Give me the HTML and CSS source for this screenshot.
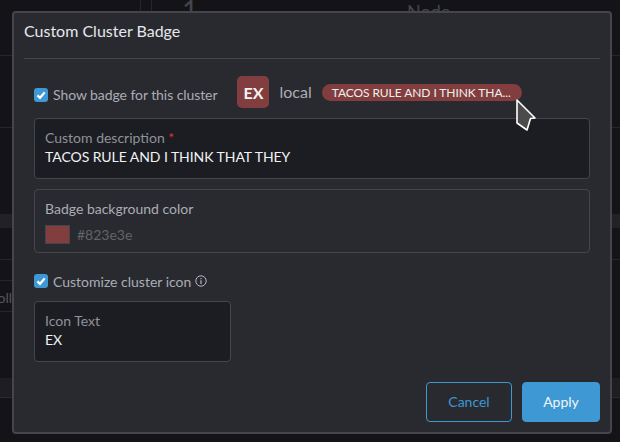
FILE: index.html
```html
<!DOCTYPE html>
<html lang="en">
<head>
    <meta charset="UTF-8" />
    <meta name="viewport" content="width=device-width, initial-scale=1" />
    <title>Custom Cluster Badge</title>
    <link rel="stylesheet" href="styles.css">
</head>
<body>
    <!-- dimmed page behind the dialog -->
    <div class="backdrop">
        <div class="bg-row bg-head">
            <span class="bg-count">1</span>
            <span class="bg-title">Node</span>
        </div>
        <div class="bg-row bg-r2"></div>
        <div class="bg-row bg-r3"></div>
        <div class="bg-row bg-band"></div>
        <div class="bg-row bg-r4"></div>
        <div class="bg-row bg-short bg-r5"></div>
        <div class="bg-row bg-short bg-r6"><span class="bg-word">Coll</span></div>
        <div class="bg-gap"></div>
        <div class="bg-row bg-band bg-band-low"></div>
    </div>

    <div class="modal">
        <h2 class="modal-title">Custom Cluster Badge</h2>
        <div class="modal-body">
            <div class="badge-row">
                <label class="check-label check-label-first">
                    <span class="check">
                        <svg viewBox="0 0 14 14" width="14" height="14"><path d="M3.4 7.4 L6 9.8 L10.7 4.4" fill="none" stroke="#fff" stroke-width="2.2"/></svg>
                    </span>
                    Show badge for this cluster
                </label>
                <span class="cluster-icon">EX</span>
                <span class="cluster-name">local</span>
                <span class="pill">TACOS RULE AND I THINK THA...</span>
            </div>

            <div class="field">
                <div class="field-label">Custom description <span class="required">*</span></div>
                <div class="field-value">TACOS RULE AND I THINK THAT THEY</div>
            </div>

            <div class="field field-color">
                <div class="field-label field-label-light">Badge background color</div>
                <div class="color-line">
                    <span class="swatch"></span>
                    <span class="color-code">#823e3e</span>
                </div>
            </div>

            <label class="check-label check-label-second">
                <span class="check">
                    <svg viewBox="0 0 14 14" width="14" height="14"><path d="M3.4 7.4 L6 9.8 L10.7 4.4" fill="none" stroke="#fff" stroke-width="2.2"/></svg>
                </span>
                <span class="check-text">Customize cluster icon</span>
                <svg class="info" viewBox="0 0 12 12" width="12" height="12"><circle cx="6" cy="6" r="5.2" fill="none" stroke="#b4b8bf" stroke-width="1"/><path d="M6 5.2 V9 M6 3 V4.2" stroke="#b4b8bf" stroke-width="1.2"/></svg>
            </label>

            <div class="field field-icon">
                <div class="field-label">Icon Text</div>
                <div class="field-value">EX</div>
            </div>
        </div>
        <div class="modal-actions">
            <button class="btn btn-cancel">Cancel</button>
            <button class="btn btn-apply">Apply</button>
        </div>
    </div>

    <svg class="cursor" viewBox="0 0 22 36" width="22" height="36">
        <path d="M2 2 L20 20 L15.5 20.5 L12 32 L2 25 Z" fill="#4b4b4b" stroke="#fff" stroke-width="1.6" stroke-linejoin="round"/>
    </svg>
</body>
</html>
```
FILE: styles.css
```css
html, body {
    margin: 0;
    height: 100%;
    overflow: hidden;
}
body {
    font-family: 'Lato', 'Liberation Sans', sans-serif;
    background: #141418;
    color: #b6bac1;
    font-size: 14px;
}
.backdrop {
    height: 442px;
    overflow: hidden;
}
.bg-row {
    box-sizing: border-box;
    border-bottom: 1px solid #26262b;
}
.bg-head {
    height: 56px;
    position: relative;
    background: linear-gradient(90deg, transparent 140px, #26262b 140px, #26262b 141px, transparent 141px, transparent 151px, #26262b 151px, #26262b 152px, transparent 152px);
}
.bg-count {
    position: absolute;
    left: 182px;
    top: -7px;
    font-size: 28px;
    color: #45454b;
}
.bg-title {
    position: absolute;
    left: 407px;
    top: 0;
    font-size: 18px;
    color: #45454b;
}
.bg-r2 {
    height: 72px;
}
.bg-r3 {
    height: 86px;
    border-bottom: none;
}
.bg-band {
    height: 14px;
    background: #212126;
    border-bottom: none;
}
.bg-r4 {
    height: 32px;
}
.bg-short {
    width: 12px;
    overflow: hidden;
}
.bg-r5 {
    height: 21px;
}
.bg-r6 {
    height: 31px;
    position: relative;
    white-space: nowrap;
}
.bg-word {
    position: absolute;
    right: 0;
    top: 8px;
    font-size: 14px;
    color: #56565c;
}
.bg-gap {
    height: 66px;
}
.bg-band-low {
    height: 20px;
    background: #1d1d22;
    border-bottom: 1px solid #2a2a2f;
}

.modal {
    position: absolute;
    left: 12px;
    top: 11px;
    width: 600px;
    height: 423px;
    box-sizing: border-box;
    background: #292a2f;
    border: 2px solid #45464b;
    border-radius: 4px;
    padding: 0 10px;
}
.modal-title {
    margin: 0;
    height: 46px;
    box-sizing: border-box;
    padding-top: 8px;
    border-bottom: 1px solid #45464b;
    font-size: 16px;
    line-height: 20px;
    font-weight: 400;
    color: #e6e8eb;
}
.modal-body {
    padding: 17px 10px 0;
}
.badge-row {
    display: flex;
    align-items: center;
    height: 32px;
    margin-bottom: 10px;
}
.check-label {
    display: flex;
    align-items: center;
    font-size: 14px;
    line-height: 18px;
    color: #a9adb5;
}
.check-label-first {
    margin-top: 6px;
    letter-spacing: -0.07px;
}
.check {
    width: 14px;
    height: 14px;
    border-radius: 3px;
    background: #3d98d3;
    margin-right: 5px;
    display: block;
}
.check svg {
    display: block;
}
.cluster-icon {
    margin-left: 20px;
    width: 32px;
    height: 32px;
    border-radius: 5px;
    background: #823e3e;
    color: #f4f4f4;
    font-weight: 700;
    font-size: 16px;
    display: flex;
    align-items: center;
    justify-content: center;
}
.cluster-name {
    margin-left: 10px;
    margin-top: -2px;
    font-size: 16px;
    color: #a9adb5;
}
.pill {
    margin-left: 10px;
    width: 200px;
    height: 17px;
    box-sizing: border-box;
    padding: 0 10px;
    border-radius: 9px;
    background: #823e3e;
    color: #eee;
    font-size: 12px;
    line-height: 17px;
    letter-spacing: -0.07px;
    white-space: nowrap;
    overflow: hidden;
}
.field {
    box-sizing: border-box;
    height: 61px;
    margin-bottom: 10px;
    padding: 10px 10px 0;
    background: #1c1d22;
    border: 1px solid #45464b;
    border-radius: 4px;
}
.field-label {
    font-size: 14px;
    line-height: 18px;
    color: #8f9299;
}
.field-label-light {
    color: #a9adb5;
}
.required {
    color: #d9363e;
}
.field-value {
    margin-top: 1px;
    font-size: 14px;
    line-height: 18px;
    color: #f0f2f4;
    letter-spacing: -0.06px;
}
.field-color {
    height: 64px;
    background: transparent;
}
.color-line {
    display: flex;
    align-items: center;
    margin-top: 7px;
}
.swatch {
    width: 25px;
    height: 19px;
    background: #823e3e;
    border: 1px solid #45464b;
    box-sizing: border-box;
}
.color-code {
    margin-left: 7px;
    font-size: 14px;
    color: #62646a;
}
.check-label-second {
    margin-top: 21px;
    height: 14px;
    margin-bottom: 13px;
}
.check-text {
    padding-top: 2px;
}
.info {
    margin-left: 4px;
    margin-top: -1px;
}
.field-icon {
    width: 197px;
    margin-bottom: 0;
}
.modal-actions {
    display: flex;
    justify-content: flex-end;
    gap: 10px;
    margin-top: 20px;
}
.btn {
    height: 40px;
    box-sizing: border-box;
    border-radius: 4px;
    font-family: inherit;
    font-size: 14px;
    padding: 0 0 2px;
}
.btn-cancel {
    width: 86px;
    background: transparent;
    border: 1px solid #3d98d3;
    color: #3d98d3;
}
.btn-apply {
    width: 78px;
    background: #3d98d3;
    border: 1px solid #3d98d3;
    color: #f4f6f8;
}
.cursor {
    position: absolute;
    left: 515px;
    top: 98px;
}
```
